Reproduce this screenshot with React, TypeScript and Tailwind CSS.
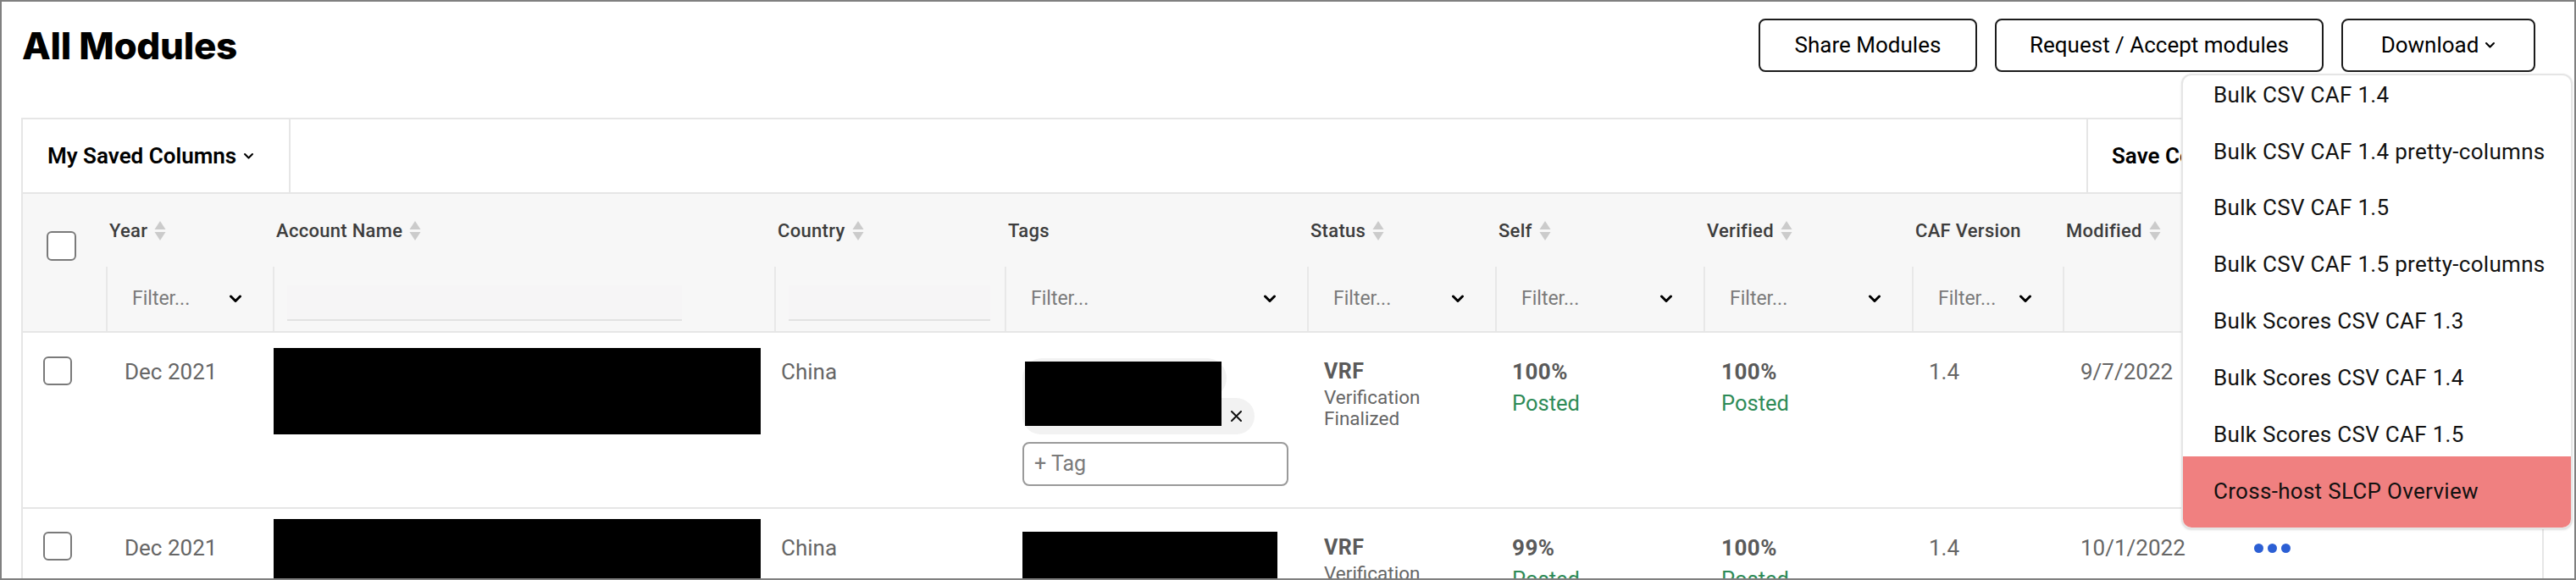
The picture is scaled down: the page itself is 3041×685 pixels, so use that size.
import React from "react";

const SortIcon = () => (
  <svg width="14" height="23" viewBox="0 0 14 23" className="shrink-0">
    <path d="M7 0 L13.5 10 L0.5 10 Z" fill="#cbcbcb" />
    <path d="M0.5 13 L13.5 13 L7 23 Z" fill="#cbcbcb" />
  </svg>
);

const Chevron = ({ w = 16, h = 10, sw = 3 }: { w?: number; h?: number; sw?: number }) => (
  <svg width={w} height={h} viewBox="0 0 16 10" className="shrink-0">
    <path d="M2.5 2 L8 7.5 L13.5 2" fill="none" stroke="#000" strokeWidth={sw} strokeLinecap="round" strokeLinejoin="round" />
  </svg>
);

const Checkbox = ({ size = 34 }: { size?: number }) => (
  <div
    className="border-[2.5px] border-[#7a7a7a] rounded-[6px] bg-white"
    style={{ width: size, height: size }}
  />
);

const Title = ({ label, sort = true }: { label: string; sort?: boolean }) => (
  <div className="flex items-center gap-[8px] pl-[4px] text-[22px] tracking-[0.3px] font-medium text-[#3d3d3d]">
    <span>{label}</span>
    {sort && <SortIcon />}
  </div>
);

const FilterSelect = () => (
  <div className="flex items-center justify-between border-l-2 border-[#e8e8e8] pl-[29px] pr-[36px] text-[23px] text-[#7a7a7a]">
    <span>Filter...</span>
    <Chevron />
  </div>
);

const FilterInput = ({ width }: { width: number }) => (
  <div className="flex items-end border-l-2 border-[#e8e8e8] pl-[15px] pb-[12px]">
    <div className="h-[42px] border-b-2 border-[#e2e2e2] bg-[#f6f5f6]" style={{ width }} />
  </div>
);

const Dots = () => (
  <div className="flex gap-[5px]">
    <div className="w-[11px] h-[11px] rounded-full bg-[#2c5fd4]" />
    <div className="w-[11px] h-[11px] rounded-full bg-[#2c5fd4]" />
    <div className="w-[11px] h-[11px] rounded-full bg-[#2c5fd4]" />
  </div>
);

const cols = "grid grid-cols-[98px_197px_592px_272px_357px_222px_246px_246px_178px_205px_1fr]";

const CloseX = () => (
  <svg width="13" height="13" viewBox="0 0 13 13">
    <path d="M1 1 L12 12 M12 1 L1 12" stroke="#111" strokeWidth="2" strokeLinecap="round" />
  </svg>
);

type RowProps = {
  cbTop: number;
  acctTop: number;
  tags: "pill" | "box";
  self: string;
  verified: string;
  modified: string;
};

const DataRow = ({ cbTop, acctTop, tags, self, verified, modified }: RowProps) => (
  <div className={`${cols} h-[208px] border-b-2 border-[#e6e6e6] items-start text-[26px] leading-[30px] text-[#666]`}>
    <div className="pl-[24px]" style={{ paddingTop: cbTop }}>
      <Checkbox size={34} />
    </div>
    <div className="pl-[22px] pt-[31px]">Dec 2021</div>
    <div className="pl-[1px]" style={{ paddingTop: acctTop }}>
      <div className="w-[575px] h-[102px] bg-black" />
    </div>
    <div className="pl-[8px] pt-[31px]">China</div>
    <div className="pl-[21px]" style={{ paddingTop: tags === "pill" ? 30 : 27 }}>
      {tags === "pill" ? (
        <div className="relative w-[314px]">
          <div className="w-[241px] h-[47px] rounded-t-[24px] rounded-br-[24px] bg-[#f2f2f2]" />
          <div className="w-[274px] h-[43px] rounded-b-[22px] rounded-tr-[22px] bg-[#f2f2f2] flex items-center justify-end pr-[15px]">
            <CloseX />
          </div>
          <div className="absolute left-[3px] top-[4px] w-[232px] h-[76px] bg-black" />
          <div className="mt-[9px] w-[314px] h-[52px] border-2 border-[#9a9a9a] rounded-[8px] flex items-center pl-[12px] text-[25px] text-[#7a7a7a]">
            + Tag
          </div>
        </div>
      ) : (
        <div className="w-[301px] h-[90px] bg-black" />
      )}
    </div>
    <div className="pl-[20px] pt-[31px]">
      <div className="font-bold text-[25px] leading-[30px] text-[#5a5a5a] tracking-[0.5px]">VRF</div>
      <div className="mt-[3px] text-[22.5px] leading-[25px] text-[#666]">
        Verification
        <br />
        Finalized
      </div>
    </div>
    <div className="pl-[20px] pt-[31px]">
      <div className="font-bold text-[26px] leading-[30px] text-[#5a5a5a] tracking-[0.5px]">{self}</div>
      <div className="mt-[7px] text-[25.5px] leading-[30px] text-[#2e8b57]">Posted</div>
    </div>
    <div className="pl-[21px] pt-[31px]">
      <div className="font-bold text-[26px] leading-[30px] text-[#5a5a5a] tracking-[0.5px]">{verified}</div>
      <div className="mt-[7px] text-[25.5px] leading-[30px] text-[#2e8b57]">Posted</div>
    </div>
    <div className="pl-[20px] pt-[31px]">1.4</div>
    <div className="pl-[21px] pt-[31px]">{modified}</div>
    <div className="pl-[21px] pt-[41px]">
      <Dots />
    </div>
  </div>
);

const menuItems = [
  "Bulk CSV CAF 1.4",
  "Bulk CSV CAF 1.4 pretty-columns",
  "Bulk CSV CAF 1.5",
  "Bulk CSV CAF 1.5 pretty-columns",
  "Bulk Scores CSV CAF 1.3",
  "Bulk Scores CSV CAF 1.4",
  "Bulk Scores CSV CAF 1.5",
];

export default function App() {
  return (
    <div className="relative w-[3041px] h-[685px] overflow-hidden border-2 border-[#808080] bg-white font-['Roboto',sans-serif] text-black">
      <div className="pl-[23px] pr-[36px] pt-[20px]">
        <div className="flex items-center justify-between h-[63px] pr-[10px]">
          <h1 className="pl-[1px] font-['Inter',sans-serif] text-[44px] font-extrabold leading-none tracking-[-0.3px] text-black">
            All Modules
          </h1>
          <div className="flex gap-[21px] text-[26px]">
            <button className="w-[258px] h-[63px] border-2 border-[#1c1c1c] rounded-[8px] bg-white">Share Modules</button>
            <button className="w-[388px] h-[63px] border-2 border-[#1c1c1c] rounded-[8px] bg-white">Request / Accept modules</button>
            <button className="w-[229px] h-[63px] border-2 border-[#1c1c1c] rounded-[8px] bg-white flex items-center justify-center gap-[7px]">
              <span>Download</span>
              <Chevron w={13} h={9} sw={2.6} />
            </button>
          </div>
        </div>

        <div className="mt-[54px] border-2 border-[#e6e6e6]">
          {/* toolbar */}
          <div className="flex h-[88px] border-b-2 border-[#e6e6e6]">
            <div className="w-[316px] border-r-2 border-[#e6e6e6] flex items-center gap-[8px] pl-[29px] text-[26px] font-semibold">
              <span>My Saved Columns</span>
              <Chevron w={13} h={9} sw={2.6} />
            </div>
            <div className="flex-1" />
            <div className="w-[538px] border-l-2 border-[#e6e6e6] flex items-center pl-[28px] text-[26px] font-semibold">
              Save Columns
            </div>
          </div>

          {/* header */}
          <div className={`${cols} grid-rows-[86px_76px] bg-[#f7f7f7] border-b-2 border-[#e6e6e6]`}>
            <div className="row-span-2 pl-[28px] pt-[44px]">
              <Checkbox size={35} />
            </div>
            <Title label="Year" />
            <Title label="Account Name" />
            <Title label="Country" />
            <Title label="Tags" sort={false} />
            <Title label="Status" />
            <Title label="Self" />
            <Title label="Verified" />
            <Title label="CAF Version" sort={false} />
            <Title label="Modified" />
            <div />
            <FilterSelect />
            <FilterInput width={466} />
            <FilterInput width={238} />
            <FilterSelect />
            <FilterSelect />
            <FilterSelect />
            <FilterSelect />
            <FilterSelect />
            <div className="border-l-2 border-[#e8e8e8]" />
            <div className="border-l-2 border-[#e8e8e8]" />
          </div>

          <DataRow cbTop={28} acctTop={18} tags="pill" self="100%" verified="100%" modified="9/7/2022" />
          <DataRow cbTop={27} acctTop={12} tags="box" self="99%" verified="100%" modified="10/1/2022" />
        </div>
      </div>

      {/* dropdown menu */}
      <div className="absolute left-[2573px] top-[85px] w-[462px] h-[538px] overflow-hidden rounded-[12px] border-2 border-black/10 bg-white shadow-sm">
        <div className="-mt-[18px]">
          {menuItems.map((m) => (
            <div key={m} className="h-[66.8px] pt-[16px] pl-[36px] flex items-center text-[26px] tracking-[0.3px] text-[#111]">
              {m}
            </div>
          ))}
          <div className="h-[86px] pt-[16px] pb-[19px] pl-[36px] flex items-center text-[26px] tracking-[0.3px] text-[#111] bg-[#f08080]">
            Cross-host SLCP Overview
          </div>
        </div>
      </div>
    </div>
  );
}
